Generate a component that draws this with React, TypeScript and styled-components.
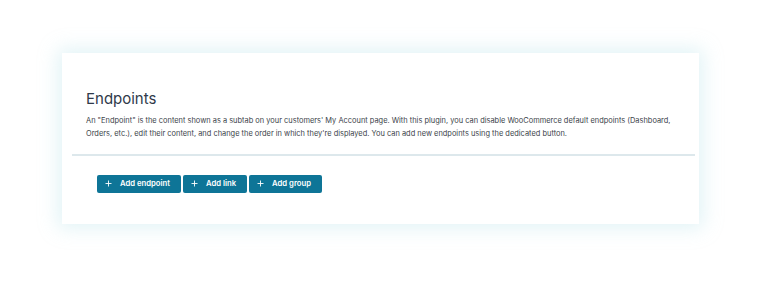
import React from "react";
import styled, { createGlobalStyle } from "styled-components";

const Global = createGlobalStyle`
  html, body {
    margin: 0;
    padding: 0;
    background: #ffffff;
    font-family: Inter, "Noto Sans", sans-serif;
  }
`;

const Page = styled.div`
  width: 768px;
  height: 284px;
  padding: 53px 0 0 62px;
  box-sizing: border-box;
`;

const Card = styled.div`
  width: 637px;
  height: 171px;
  background: #ffffff;
  box-shadow: 0 0 18px 4px rgba(170, 220, 230, 0.35);
  box-sizing: border-box;
  padding-top: 36px;
`;

const Header = styled.div`
  padding: 0 8px 0 24px;
`;

const Title = styled.h2`
  margin: 0;
  font-size: 15px;
  font-weight: 400;
  line-height: 20px;
  color: #2f3a4a;
`;

const Desc = styled.p`
  margin: 5px 0 0;
  font-size: 7.45px;
  line-height: 13px;
  color: #3c434a;
`;

const Divider = styled.hr`
  border: none;
  height: 1.5px;
  background: #dde8ec;
  margin: 14px 4px 0 10px;
`;

const Actions = styled.div`
  display: flex;
  gap: 2px;
  padding: 19px 0 0 35px;
`;

const Button = styled.button`
  display: flex;
  align-items: center;
  gap: 8px;
  height: 18px;
  padding: 0 11px 0 8px;
  border: none;
  border-radius: 2px;
  background: #0e7597;
  color: #ffffff;
  font-family: Inter, "Noto Sans", sans-serif;
  font-size: 7.7px;
  font-weight: 600;
  cursor: pointer;
`;

const Plus = () => (
  <svg width="7" height="7" viewBox="0 0 7 7">
    <path d="M3.5 0.5v6M0.5 3.5h6" stroke="#ffffff" strokeWidth="0.9" />
  </svg>
);

export default function App() {
  return (
    <>
      <Global />
      <Page>
        <Card>
          <Header>
            <Title>Endpoints</Title>
            <Desc>
              An "Endpoint" is the content shown as a subtab on your customers' My Account page. With this plugin, you can
              disable WooCommerce default endpoints (Dashboard, Orders, etc.), edit their content, and change the order in
              which they're displayed. You can add new endpoints using the dedicated button.
            </Desc>
          </Header>
          <Divider />
          <Actions>
            <Button>
              <Plus />
              Add endpoint
            </Button>
            <Button>
              <Plus />
              Add link
            </Button>
            <Button>
              <Plus />
              Add group
            </Button>
          </Actions>
        </Card>
      </Page>
    </>
  );
}
